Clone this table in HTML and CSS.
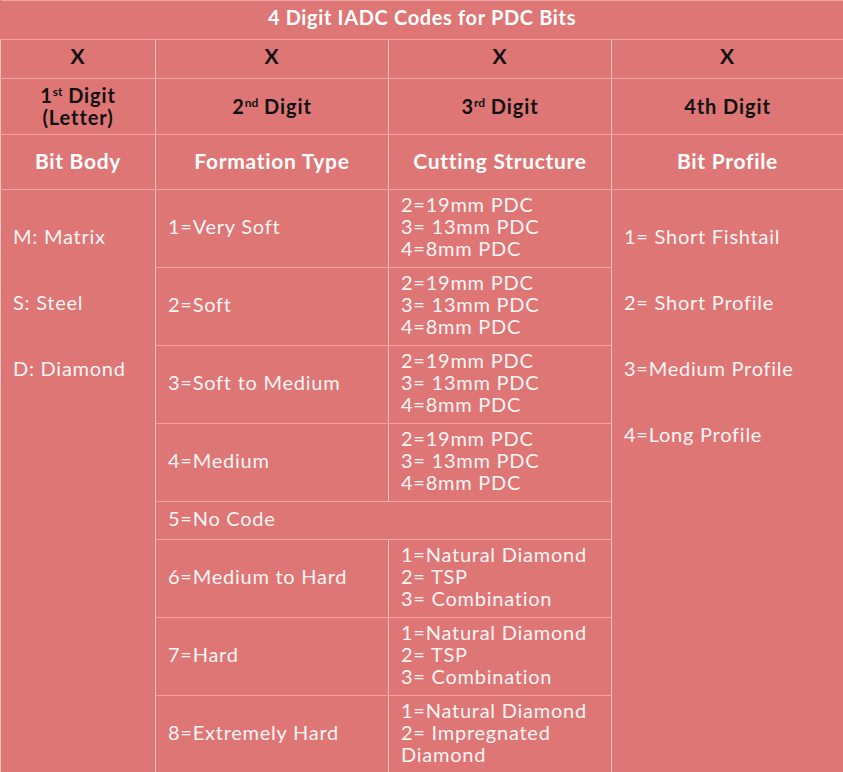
FILE: index.html
```html
<!DOCTYPE html>
<html>
<head>
<meta charset="utf-8">
<link rel="stylesheet" href="styles.css">
</head>
<body>
<table class="iadc">
  <colgroup>
    <col class="c1"><col class="c2"><col class="c3"><col class="c4">
  </colgroup>
  <tr class="r-title">
    <th colspan="4" class="title">4 Digit IADC Codes for PDC Bits</th>
  </tr>
  <tr class="r-x">
    <th class="dark">X</th><th class="dark">X</th><th class="dark">X</th><th class="dark">X</th>
  </tr>
  <tr class="r-digit">
    <th class="dark">1<sup>st</sup> Digit<br>(Letter)</th>
    <th class="dark">2<sup>nd</sup> Digit</th>
    <th class="dark">3<sup>rd</sup> Digit</th>
    <th class="dark">4th Digit</th>
  </tr>
  <tr class="r-head">
    <th>Bit Body</th><th>Formation Type</th><th>Cutting Structure</th><th>Bit Profile</th>
  </tr>
  <tr class="r-body">
    <td rowspan="8" class="list">
      <p>M: Matrix</p>
      <p>S: Steel</p>
      <p>D: Diamond</p>
    </td>
    <td>1=Very Soft</td>
    <td>2=19mm PDC<br>3= 13mm PDC<br>4=8mm PDC</td>
    <td rowspan="8" class="list">
      <p>1= Short Fishtail</p>
      <p>2= Short Profile</p>
      <p>3=Medium Profile</p>
      <p>4=Long Profile</p>
    </td>
  </tr>
  <tr class="r-body">
    <td>2=Soft</td>
    <td>2=19mm PDC<br>3= 13mm PDC<br>4=8mm PDC</td>
  </tr>
  <tr class="r-body">
    <td>3=Soft to Medium</td>
    <td>2=19mm PDC<br>3= 13mm PDC<br>4=8mm PDC</td>
  </tr>
  <tr class="r-body">
    <td>4=Medium</td>
    <td>2=19mm PDC<br>3= 13mm PDC<br>4=8mm PDC</td>
  </tr>
  <tr class="r-short">
    <td colspan="2">5=No Code</td>
  </tr>
  <tr class="r-body">
    <td>6=Medium to Hard</td>
    <td>1=Natural Diamond<br>2= TSP<br>3= Combination</td>
  </tr>
  <tr class="r-body">
    <td>7=Hard</td>
    <td>1=Natural Diamond<br>2= TSP<br>3= Combination</td>
  </tr>
  <tr class="r-body">
    <td>8=Extremely Hard</td>
    <td>1=Natural Diamond<br>2= Impregnated<br>Diamond</td>
  </tr>
</table>
</body>
</html>
```

FILE: styles.css
```css
html, body {
  margin: 0;
  padding: 0;
  background: #de7676;
}

.iadc {
  width: 843px;
  table-layout: fixed;
  border-collapse: collapse;
  background: #de7676;
  color: #fff5f5;
  font-family: "Lato", "Liberation Sans", sans-serif;
}

.c1 { width: 155px; }
.c2 { width: 233px; }
.c3 { width: 223px; }
.c4 { width: 232px; }

.iadc th,
.iadc td {
  padding: 0 12px;
  border-top: 1px solid #eca4a4;
  border-bottom: 1px solid #eca4a4;
  border-left: 1px solid #f2c4c4;
  border-right: 1px solid #f2c4c4;
  line-height: 22px;
  font-size: 20px;
}

.iadc th {
  text-align: center;
  font-weight: 700;
  font-size: 21px;
  letter-spacing: 0.7px;
  color: #ffffff;
  padding-bottom: 2px;
}

.iadc th.dark {
  color: #111111;
}

.r-digit th {
  font-size: 20px;
  letter-spacing: 0.9px;
}

.r-x th {
  padding-bottom: 7px;
}

.iadc th.title {
  font-size: 20px;
  letter-spacing: 0.65px;
  border-left: none;
  border-right: none;
  padding-bottom: 7px;
}

.iadc sup {
  font-size: 12px;
  letter-spacing: 0;
  line-height: 0;
  vertical-align: 7px;
}

.r-title { height: 39px; }
.r-x { height: 39px; }
.r-digit { height: 56px; }
.r-head { height: 55px; }
.r-body { height: 78px; }
.r-short { height: 38px; }

.iadc td {
  font-weight: 400;
  letter-spacing: 0.75px;
  vertical-align: middle;
  text-align: left;
  padding-bottom: 6px;
}

.iadc td.list {
  vertical-align: top;
  padding-top: 35px;
}

.list p {
  margin: 0 0 44px 0;
}
```
